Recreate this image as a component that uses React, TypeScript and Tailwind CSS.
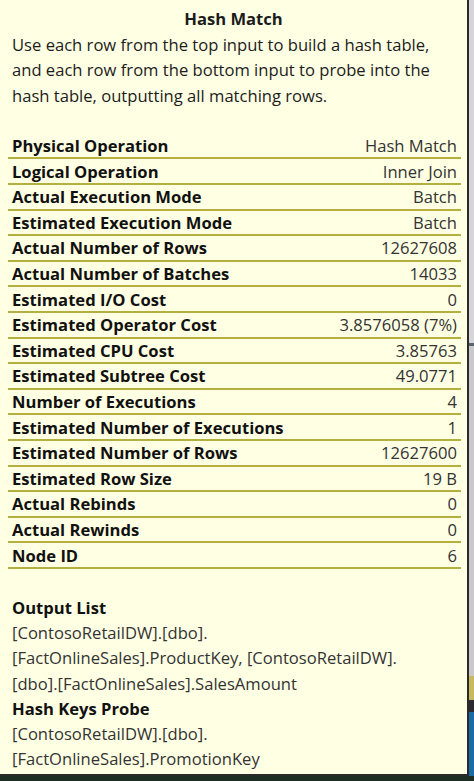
const rows: [string, string][] = [
  ["Physical Operation", "Hash Match"],
  ["Logical Operation", "Inner Join"],
  ["Actual Execution Mode", "Batch"],
  ["Estimated Execution Mode", "Batch"],
  ["Actual Number of Rows", "12627608"],
  ["Actual Number of Batches", "14033"],
  ["Estimated I/O Cost", "0"],
  ["Estimated Operator Cost", "3.8576058 (7%)"],
  ["Estimated CPU Cost", "3.85763"],
  ["Estimated Subtree Cost", "49.0771"],
  ["Number of Executions", "4"],
  ["Estimated Number of Executions", "1"],
  ["Estimated Number of Rows", "12627600"],
  ["Estimated Row Size", "19 B"],
  ["Actual Rebinds", "0"],
  ["Actual Rewinds", "0"],
  ["Node ID", "6"],
];

export default function App() {
  return (
    <div
      className="flex flex-col w-[474px] h-[781px] bg-[#cfcfcf] overflow-hidden"
      style={{ fontFamily: '"Open Sans", "Noto Sans", sans-serif' }}
    >
      <div className="flex flex-1 min-h-0">
        <div className="w-[469px] h-[776px] shrink-0 bg-[#ffffe3] border-r-2 border-b-2 border-[#2a2a2a] text-[16.6px] leading-[25.2px] text-[#1c1c1c]">
          <div className="pt-[6px] text-center font-bold">Hash Match</div>
          <p className="px-3 mt-[1px] whitespace-nowrap">
            Use each row from the top input to build a hash table,
            <br />
            and each row from the bottom input to probe into the
            <br />
            hash table, outputting all matching rows.
          </p>

          <div className="mt-[26px] ml-[8px] mr-[6px]">
            {rows.map(([label, value]) => (
              <div
                key={label}
                className="flex justify-between items-center h-[25.6px] pl-[4px] pr-[4px] border-b-2 border-[#b4b040]"
              >
                <span className="font-bold text-[#111] whitespace-nowrap">{label}</span>
                <span className="text-[#333] whitespace-nowrap">{value}</span>
              </div>
            ))}
          </div>

          <div className="px-3 mt-[26px] whitespace-nowrap">
            <div className="font-bold text-[#111]">Output List</div>
            <div className="text-[#333]">
              [ContosoRetailDW].[dbo].
              <br />
              [FactOnlineSales].ProductKey, [ContosoRetailDW].
              <br />
              [dbo].[FactOnlineSales].SalesAmount
            </div>
            <div className="font-bold text-[#111]">Hash Keys Probe</div>
            <div className="text-[#333]">
              [ContosoRetailDW].[dbo].
              <br />
              [FactOnlineSales].PromotionKey
            </div>
          </div>
        </div>

        <div className="flex flex-col flex-1">
          <div className="h-[343px] bg-[#d6d6d6]" />
          <div className="h-[3px] bg-[#5a6470]" />
          <div className="h-[330px] bg-[#c9c9c9]" />
          <div className="h-[24px] bg-[#c8b860]" />
          <div className="h-[12px] bg-[#2a2a30]" />
          <div className="flex-1 bg-[#1d6aa8]" />
        </div>
      </div>
      <div className="h-[5px] bg-[#1f2e24]" />
    </div>
  );
}
